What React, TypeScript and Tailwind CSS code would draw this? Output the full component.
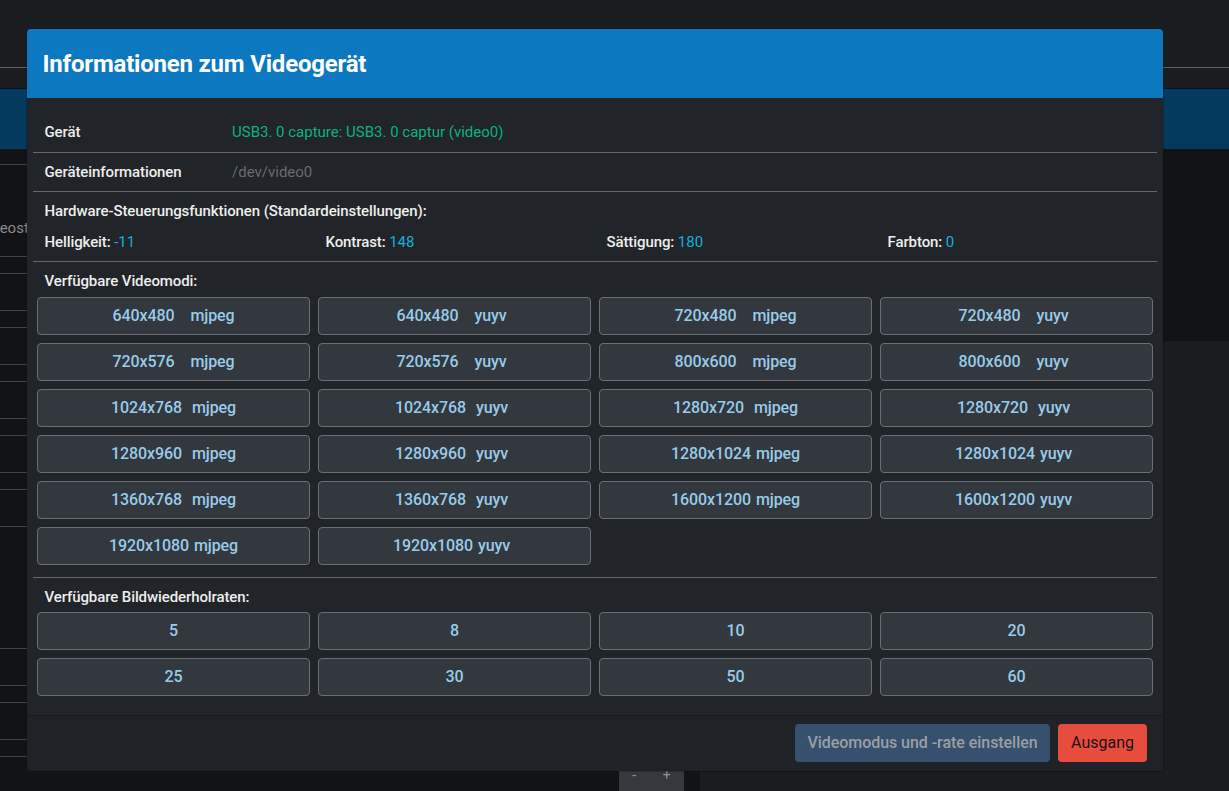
import React from 'react';

const orderedModes: string[][] = [
  ['640x480', 'mjpeg'], ['640x480', 'yuyv'], ['720x480', 'mjpeg'], ['720x480', 'yuyv'],
  ['720x576', 'mjpeg'], ['720x576', 'yuyv'], ['800x600', 'mjpeg'], ['800x600', 'yuyv'],
  ['1024x768', 'mjpeg'], ['1024x768', 'yuyv'], ['1280x720', 'mjpeg'], ['1280x720', 'yuyv'],
  ['1280x960', 'mjpeg'], ['1280x960', 'yuyv'], ['1280x1024', 'mjpeg'], ['1280x1024', 'yuyv'],
  ['1360x768', 'mjpeg'], ['1360x768', 'yuyv'], ['1600x1200', 'mjpeg'], ['1600x1200', 'yuyv'],
  ['1920x1080', 'mjpeg'], ['1920x1080', 'yuyv'],
];
const rates = [5, 8, 10, 20, 25, 30, 50, 60];

// rows of the table behind the modal, only the left edge is visible
const backgroundRows = [
  'h-[16px]', 'h-[92px]', 'h-[17px]', 'h-[37px]', 'h-[17px]', 'h-[37px]', 'h-[17px]', 'h-[37px]', 'h-[17px]',
  'h-[37px]', 'h-[17px]', 'h-[37px]', 'h-[122px]', 'h-[37px]', 'h-[17px]', 'h-[37px]', 'h-[17px]',
];

const gapClass = (res: string) => {
  if (res.length === 7) return 'ml-[16px]';
  if (res.length === 8) return 'ml-[10px]';
  return 'ml-[5px]';
};

const OptionButton: React.FC<{ children: React.ReactNode }> = ({ children }) => (
  <button className="flex h-[38px] items-center justify-center rounded-[4px] border border-[#6a6f75] bg-[#33373e] text-base font-medium tracking-[-0.1px] text-[#98cbe9]">
    {children}
  </button>
);

const Control: React.FC<{ label: string; value: string }> = ({ label, value }) => (
  <div className="pl-[11.5px] text-[15px] font-medium leading-5 tracking-[-0.1px] text-[#eeeeee]">
    {label}: <span className="font-normal tracking-normal text-[#12b0dc]">{value}</span>
  </div>
);

export default function App() {
  return (
    <div className="relative h-[791px] w-[1229px] overflow-hidden bg-[#1a1d20] font-['Roboto',sans-serif]">
      <div className="h-[68px] border-b border-[#5d5f61]" />
      <div className="h-[21px] border-b border-[#0f1012]" />
      <div className="h-[60px] bg-[#043a5e]" />

      <div className="flex">
        <div className="w-[700px] bg-[#121315]">
          {backgroundRows.map((h, i) => (
            <div key={i} className={`${h} flex items-center overflow-hidden border-b border-[#414345]`}>
              {i === 1 && <span className="ml-[-22px] mt-[36px] whitespace-nowrap text-[15px] text-[#8a8a8a]">Videostream</span>}
            </div>
          ))}
          <div className="h-[14px]" />
          <div className="ml-[619px] flex h-[20px] w-[65px] items-start justify-around bg-[#35383c] text-sm leading-[9px] text-[#8d9296]">
            <span>-</span>
            <span>+</span>
          </div>
        </div>
        <div className="flex-1">
          <div className="h-[192px] bg-[#111214]" />
        </div>
      </div>

      <div className="absolute left-[27px] top-[29px] flex h-[742px] w-[1136px] flex-col overflow-hidden rounded-[4px] bg-[#212428] shadow-[0_0_0_1px_rgba(0,0,0,0.2)]">
        <div className="flex h-[69px] items-center bg-[#0c78c0] pl-[15.5px]">
          <h1 className="text-2xl font-bold tracking-[-0.2px] text-white">Informationen zum Videogerät</h1>
        </div>

        <div className="flex-1 px-[6px]">
          <div className="flex h-[55px] items-end border-b border-[#63666a] pb-[10px] text-[15px] leading-5">
            <div className="w-[199px] pl-[11.5px] font-medium tracking-[-0.1px] text-[#eeeeee]">Gerät</div>
            <div className="text-[#10b07f]">USB3. 0 capture: USB3. 0 captur (video0)</div>
          </div>
          <div className="flex h-[39px] items-center border-b border-[#63666a] text-[15px] leading-5">
            <div className="w-[199px] pl-[11.5px] font-medium tracking-[-0.1px] text-[#eeeeee]">Geräteinformationen</div>
            <div className="text-[#686b6f]">/dev/video0</div>
          </div>
          <div className="h-[70px] border-b border-[#63666a]">
            <div className="pl-[11.5px] pt-[9px] text-[15px] font-medium leading-5 tracking-[-0.1px] text-[#eeeeee]">Hardware-Steuerungsfunktionen (Standardeinstellungen):</div>
            <div className="mt-[11px] grid w-[1124px] grid-cols-4">
              <Control label="Helligkeit" value="-11" />
              <Control label="Kontrast" value="148" />
              <Control label="Sättigung" value="180" />
              <Control label="Farbton" value="0" />
            </div>
          </div>

          <div className="h-[316px] border-b border-[#63666a]">
            <div className="pl-[11.5px] pt-[9px] text-[15px] font-medium leading-5 tracking-[-0.1px] text-[#eeeeee]">Verfügbare Videomodi:</div>
            <div className="mx-1 mt-[6px] grid grid-cols-4 gap-2">
              {orderedModes.map(([res, format]) => (
                <OptionButton key={res + format}>
                  <span>{res}</span>
                  <span className={gapClass(res)}>{format}</span>
                  {/* yuyv is shorter than mjpeg, the reference leaves it slightly left of centre */}
                  {format === 'yuyv' && <span className="w-[6px]" />}
                </OptionButton>
              ))}
            </div>
          </div>

          <div className="pl-[11.5px] pt-[9px] text-[15px] font-medium leading-5 tracking-[-0.1px] text-[#eeeeee]">Verfügbare Bildwiederholraten:</div>
          <div className="mx-1 mt-[5px] grid grid-cols-4 gap-2">
            {rates.map((r) => (
              <OptionButton key={r}>{r}</OptionButton>
            ))}
          </div>
        </div>

        <div className="flex h-[56px] justify-end gap-2 border-t border-[#191c1f] bg-[#1f2226] pr-4 pt-2">
          <button className="h-[38px] w-[255px] rounded-[4px] bg-[#36506d] text-base font-medium tracking-[-0.05px] text-[#9a9fa6]">Videomodus und -rate einstellen</button>
          <button className="h-[38px] w-[89px] rounded-[4px] bg-[#e74c3c] text-base text-[#1c1214]">Ausgang</button>
        </div>
      </div>
    </div>
  );
}
